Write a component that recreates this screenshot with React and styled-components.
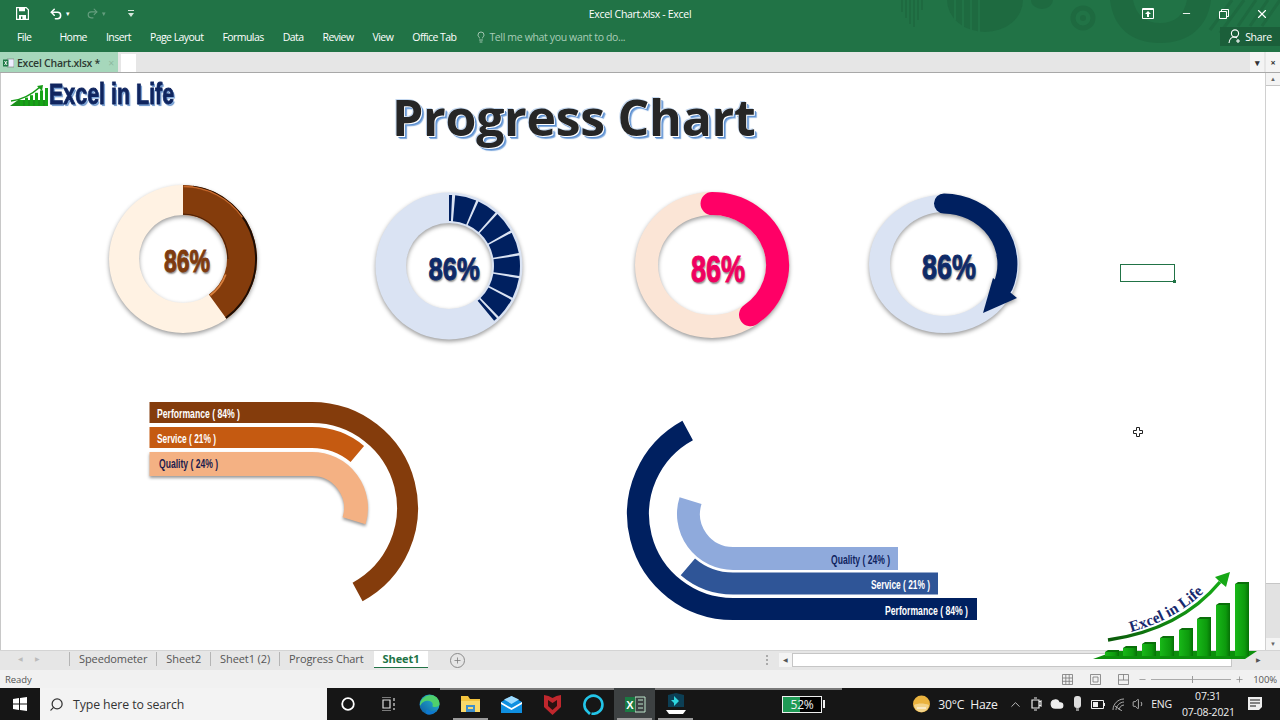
import React from 'react';
import styled, { createGlobalStyle } from 'styled-components';
import { Undo2, Redo2, Lightbulb, Search, Minus, X, ChevronUp, Cloud, Volume1, Plus } from 'lucide-react';

const GlobalStyle = createGlobalStyle`
  html, body { margin: 0; padding: 0; background: #fff; overflow: hidden; }
  body { font-family: "Open Sans", "Noto Sans", sans-serif; }
`;

const Page = styled.div`
  position: relative;
  width: 1280px;
  height: 720px;
  display: flex;
  flex-direction: column;
  overflow: hidden;
`;

/* ---------- window chrome ---------- */
const Header = styled.header`
  position: relative;
  height: 52px;
  background: #217346;
  color: #fff;
  display: flex;
  flex-direction: column;
  flex: none;
`;
const Deco = styled.svg`
  position: absolute;
  left: 890px;
  top: 0;
  pointer-events: none;
`;
const TitleRow = styled.div`
  position: relative;
  height: 27px;
  display: flex;
  align-items: center;
  padding-left: 15px;
`;
const QuickIcon = styled.span`
  display: inline-flex;
  align-items: center;
  justify-content: center;
  width: ${p => p.$w || 14}px;
  margin-right: ${p => p.$gap || 0}px;
  opacity: ${p => (p.$dim ? 0.3 : 1)};
  font-size: 7px;
`;
const DocTitle = styled.div`
  position: absolute;
  left: 0;
  right: 0;
  top: 7px;
  text-align: center;
  font-size: 10.5px;
  line-height: 14px;
  letter-spacing: -0.3px;
`;
const WindowButtons = styled.div`
  margin-left: auto;
  display: flex;
  align-items: center;
  gap: 24px;
  padding-right: 11px;
`;
const WinBtn = styled.span`
  display: inline-flex;
  width: 14px;
  justify-content: center;
`;
const RibbonRow = styled.nav`
  position: relative;
  flex: 1;
  display: flex;
  align-items: center;
  padding: 0 0 5px 17px;
  font-size: 10.5px;
  letter-spacing: -0.55px;
`;
const RibbonTab = styled.span`
  margin-right: ${p => p.$gap || 19}px;
  white-space: nowrap;
`;
const TellMe = styled.span`
  display: inline-flex;
  align-items: center;
  gap: 2px;
  color: #a9cdb8;
  margin-left: 0;
  letter-spacing: -0.35px;
`;
const ShareBtn = styled.div`
  position: absolute;
  right: 0;
  top: 0;
  width: 60px;
  height: 19px;
  background: #1b5f3a;
  display: flex;
  align-items: center;
  justify-content: center;
  gap: 3px;
  letter-spacing: -0.3px;
`;

const DocTabs = styled.div`
  flex: none;
  height: 21px;
  background: #e6e6e6;
  border-bottom: 1px solid #a8a8a8;
  box-sizing: border-box;
  display: flex;
  align-items: stretch;
`;
const DocTab = styled.div`
  width: 118px;
  background: #a6d7bb;
  display: flex;
  align-items: center;
  gap: 3px;
  padding: 1px 0 0 3px;
  box-sizing: border-box;
  font-size: 10.5px;
  font-weight: 600;
  letter-spacing: -0.25px;
  color: #2d3a33;
  white-space: nowrap;
`;
const TabClose = styled.span`
  color: #8db9a0;
  font-weight: 400;
  margin-left: 5px;
`;
const BlankTab = styled.div`
  width: 15px;
  margin: 2px 0 0 3px;
  background: #fff;
`;
const TabTools = styled.div`
  margin-left: auto;
  display: flex;
  gap: 2px;
`;
const TabTool = styled.span`
  width: 14px;
  background: #f4f4f4;
  display: flex;
  align-items: center;
  justify-content: center;
  font-size: 9px;
  font-weight: 700;
  color: #333;
`;

/* ---------- sheet ---------- */
const SheetArea = styled.main`
  flex: 1;
  min-height: 0;
  display: flex;
`;
const Canvas = styled.div`
  position: relative;
  flex: 1;
  background: #fff;
  border-left: 1px solid #c8c8c8;
`;
const VScroll = styled.aside`
  flex: none;
  width: 15px;
  background: #e2e2e2;
  border-left: 1px solid #d0d0d0;
  box-sizing: border-box;
  display: flex;
  flex-direction: column;
`;
const ScrollArrow = styled.span`
  height: ${p => p.$h || 12}px;
  background: #f4f4f4;
  display: flex;
  align-items: center;
  justify-content: center;
  font-size: 6px;
  color: #666;
  flex: none;
`;
const VThumb = styled.div`
  height: 497px;
  background: #fff;
  border: 1px solid #c6c6c6;
  border-width: 1px 0;
  flex: none;
`;
const Spacer = styled.div`
  flex: 1;
`;

const Placed = styled.div`
  position: absolute;
  left: ${p => p.$x}px;
  top: ${p => p.$y}px;
`;
const LogoMark = styled(Placed)`
  display: flex;
  align-items: flex-end;
`;
const LogoText = styled.span`
  display: inline-block;
  font-family: "Liberation Sans", sans-serif;
  font-weight: 700;
  font-size: 30px;
  line-height: 27px;
  color: #10255f;
  -webkit-text-stroke: 0.8px #10255f;
  text-shadow: 1px 1px 0 #8db4e2, -1px 0 0 #cfe0f4, 2px 2px 1px #6d96cc;
  white-space: nowrap;
  transform: scaleX(0.715);
  transform-origin: left center;
`;
const SheetTitle = styled(Placed)`
  font-family: "Open Sans", "Noto Sans", sans-serif;
  font-weight: 700;
  font-size: 50px;
  line-height: 60px;
  letter-spacing: -0.3px;
  color: #262626;
  text-shadow: 1px 1px 0 #fff, -1px -1px 0 #c5d8ef, 2px 2px 0 #5c8fd0, 3px 3px 1px #7ea8dc;
  white-space: nowrap;
`;
const Gauge = styled(Placed)`
  width: 180px;
  height: 180px;
  display: grid;
  place-items: center;
`;
const GaugeArt = styled.svg`
  grid-area: 1 / 1;
  width: 180px;
  height: 180px;
  overflow: visible;
`;
const Percent = styled.span`
  grid-area: 1 / 1;
  font-family: "Liberation Sans", sans-serif;
  font-weight: 700;
  font-size: ${p => p.$size}px;
  line-height: 1;
  color: ${p => p.$color};
  -webkit-text-stroke: 0.9px ${p => p.$color};
  text-shadow: 1px 2px 2px rgba(0, 0, 0, 0.45);
  transform: translate(${p => p.$dx}px, ${p => p.$dy}px) scaleX(${p => p.$sx});
`;
const ShadowGroup = styled.g`
  filter: drop-shadow(0 2px 2px rgba(0, 0, 0, 0.4));
`;
const SelectedCell = styled(Placed)`
  width: 55px;
  height: 18px;
  box-sizing: border-box;
  border: 1.5px solid #217346;
  &::after {
    content: '';
    position: absolute;
    right: -2px;
    bottom: -2px;
    width: 3px;
    height: 3px;
    background: #217346;
  }
`;
const CellCursor = styled(Placed)`
  width: 10px;
  height: 10px;
  display: flex;
`;
const BarChart = styled.svg`
  position: absolute;
  left: ${p => p.$x}px;
  top: ${p => p.$y}px;
  overflow: visible;
`;
const BarStroke = styled.path`
  fill: none;
  ${p => p.$shadow && 'filter: drop-shadow(0 2px 1.5px rgba(0, 0, 0, 0.4));'}
`;
const BarLabel = styled.text`
  font-family: "Liberation Sans", sans-serif;
  font-weight: 700;
  font-size: 12px;
  fill: ${p => p.$fill};
`;

/* ---------- sheet tabs / status ---------- */
const SheetTabs = styled.div`
  flex: none;
  height: 20px;
  background: #e6e6e6;
  border-top: 1px solid #d4d4d4;
  box-sizing: border-box;
  display: flex;
  align-items: stretch;
  font-size: 11px;
  letter-spacing: -0.1px;
  color: #555;
`;
const TabNav = styled.div`
  width: 69px;
  display: flex;
  gap: 12px;
  align-items: center;
  padding: 0 0 3px 18px;
  box-sizing: border-box;
  font-size: 6px;
  color: #bbb;
`;
const SheetTab = styled.div`
  padding: 0 9px;
  display: flex;
  align-items: center;
  white-space: nowrap;
  ${p => (p.$active
    ? 'background:#fff;color:#217346;font-weight:700;border-bottom:1.5px solid #217346;margin:0 0 2px 1px;padding:0 9px 2px;'
    : 'border-left:1px solid #b5b5b5;margin:1px 0 4px;padding-bottom:1px;')}
`;
const AddSheet = styled.span`
  margin: 0 0 1px 22px;
  align-self: center;
  width: 13px;
  height: 13px;
  border: 1px solid #8a8a8a;
  border-radius: 50%;
  display: flex;
  align-items: center;
  justify-content: center;
  color: #777;
`;
const SplitDots = styled.span`
  margin-left: auto;
  width: 2px;
  height: 11px;
  align-self: center;
  background: repeating-linear-gradient(#aaa 0 2px, transparent 2px 4px);
`;
const HScroll = styled.div`
  margin: 2px 17px 3px 11px;
  display: flex;
  align-items: stretch;
  font-size: 6px;
  color: #555;
`;
const HArrow = styled.span`
  width: ${p => p.$w}px;
  display: flex;
  align-items: center;
  justify-content: center;
  background: ${p => (p.$gap ? 'transparent' : '#f4f4f4')};
  margin-left: ${p => p.$gap || 0}px;
`;
const HThumb = styled.div`
  width: 440px;
  background: #fff;
  border: 1px solid #c6c6c6;
  box-sizing: border-box;
`;
const StatusBar = styled.footer`
  flex: none;
  height: 18px;
  background: #f1f1f1;
  box-sizing: border-box;
  display: flex;
  align-items: center;
  padding: 0 3px 0 5px;
  font-size: 9.5px;
  letter-spacing: -0.1px;
  color: #555;
`;
const StatusTools = styled.div`
  margin-left: auto;
  display: flex;
  align-items: center;
  gap: 4px;
`;
const ViewIcon = styled.svg`
  margin-right: ${p => p.$gap}px;
  fill: none;
  stroke: #777;
  stroke-width: 0.8;
`;
const ZoomSlider = styled.span`
  position: relative;
  width: 80px;
  height: 1px;
  background: #aaa;
  &::after {
    content: '';
    position: absolute;
    left: 41px;
    top: -3px;
    width: 1px;
    height: 7px;
    background: #999;
  }
`;
const ZoomValue = styled.span`
  margin-left: 5px;
`;

/* ---------- taskbar ---------- */
const Taskbar = styled.div`
  position: relative;
  flex: none;
  height: 32px;
  background: #161616;
  display: flex;
  align-items: stretch;
  color: #f0f0f0;
  &::before {
    content: '';
    position: absolute;
    left: 440px;
    width: 402px;
    top: 0;
    height: 2px;
    background: #7a7a7a;
  }
`;
const StartBtn = styled.div`
  width: 40px;
  display: flex;
  align-items: center;
  justify-content: center;
  flex: none;
`;
const SearchBox = styled.div`
  width: 287px;
  flex: none;
  background: #f3f3f3;
  display: flex;
  align-items: center;
  gap: 9px;
  padding-left: 9px;
  box-sizing: border-box;
  color: #333;
  font-size: 12.3px;
  letter-spacing: -0.1px;
`;
const FlippedSearch = styled(Search)`
  transform: scaleX(-1);
`;
const TaskSlot = styled.div`
  position: relative;
  width: 41px;
  flex: none;
  display: flex;
  align-items: center;
  justify-content: center;
  background: ${p => (p.$active ? '#3d4142' : 'transparent')};
  ${p => p.$running && `
    &::after {
      content: '';
      position: absolute;
      left: 3px;
      right: 3px;
      bottom: 0;
      height: 2px;
      background: #9a9a9a;
    }`}
`;
const BatteryWidget = styled.div`
  position: relative;
  margin: 0 0 0 86px;
  align-self: center;
  width: 40px;
  height: 17px;
  box-sizing: border-box;
  border: 1.5px solid #eee;
  background: linear-gradient(90deg, #1f9a55 0 46%, #000 46%);
  display: flex;
  align-items: center;
  justify-content: center;
  font-size: 12px;
  letter-spacing: -0.2px;
  &::after {
    content: '';
    position: absolute;
    right: -4px;
    top: 3px;
    width: 2px;
    height: 8px;
    background: #eee;
  }
`;
const Tray = styled.div`
  margin-left: auto;
  display: flex;
  align-items: center;
  padding-right: 18px;
  font-size: 11px;
`;
const Weather = styled.span`
  font-size: 12.2px;
  margin: 0 8px 0 8px;
  letter-spacing: -0.2px;
  white-space: nowrap;
`;
const TrayIcon = styled.span`
  display: inline-flex;
  justify-content: center;
  width: 20.5px;
`;
const Lang = styled.span`
  margin: 0 10px 0 2px;
  font-size: 10.5px;
  letter-spacing: -0.2px;
`;
const Clock = styled.div`
  width: 52px;
  text-align: center;
  font-size: 10.5px;
  line-height: 16px;
  letter-spacing: -0.2px;
  margin-right: 14px;
  white-space: nowrap;
`;

/* ---------- helpers ---------- */
const polar = (r, deg, cx = 0, cy = 0) => {
  const a = (deg * Math.PI) / 180;
  return [cx + r * Math.sin(a), cy - r * Math.cos(a)];
};
const sector = (r0, r1, a0, a1) => {
  const [x0, y0] = polar(r1, a0);
  const [x1, y1] = polar(r1, a1);
  const [x2, y2] = polar(r0, a1);
  const [x3, y3] = polar(r0, a0);
  return `M${x0} ${y0}A${r1} ${r1} 0 0 1 ${x1} ${y1}L${x2} ${y2}A${r0} ${r0} 0 0 0 ${x3} ${y3}Z`;
};
const arc = (r, a0, a1) => {
  const [x0, y0] = polar(r, a0);
  const [x1, y1] = polar(r, a1);
  return `M${x0} ${y0}A${r} ${r} 0 0 1 ${x1} ${y1}`;
};
const ring = (rx, ry, irx, iry) =>
  `M${-rx} 0A${rx} ${ry} 0 1 1 ${rx} 0A${rx} ${ry} 0 1 1 ${-rx} 0Z` +
  `M${-irx} 0A${irx} ${iry} 0 1 0 ${irx} 0A${irx} ${iry} 0 1 0 ${-irx} 0Z`;

const SEGMENTS = [[0, 2.5], [5, 22.5], [24.5, 41], [43, 60], [62, 79.5], [81.5, 98], [100, 116.5], [118.5, 135.5], [137.5, 140.5]];

// straight run into a clockwise arc around (cx, cy), ending at angle `end`
const barPath = (fromX, y, cx, cy, r, end) => {
  const [ex, ey] = polar(r, end, cx, cy);
  return `M${fromX} ${y}L${cx} ${y}A${r} ${r} 0 0 1 ${ex} ${ey}`;
};

const Gear = () => (
  <Deco width="390" height="52" viewBox="890 0 390 52" fill="none">
    <path d="M902 0v12M906 0v18M910 0v24M914 0v27M918 0v20M922 0v10" stroke="#1e6a40" strokeWidth="2" />
    <path d="M947 0a38 32 0 0 0 76 0Z" fill="#1e6a40" />
    <path d="M955 0v20M963 0v27M971 0v30M979 0v32" stroke="#217346" strokeWidth="2" />
    <ellipse cx="1042" cy="0" rx="11" ry="9" fill="#1e6a40" />
    <circle cx="1083" cy="18" r="10" stroke="#1e6a40" strokeWidth="5" />
    <circle cx="1083" cy="18" r="3" fill="#1e6a40" />
    <path d="M1110 0c3 26 20 43 50 43s48-17 51-43h-24c-3 15-12 23-27 23s-24-8-27-23Z" fill="#1e6a40" />
    <path d="M1232 0l-22 30M1244 0l-24 33M1256 0l-18 26M1268 0l-18 26M1280 0l-18 26" stroke="#1e6a40" strokeWidth="3" />
  </Deco>
);

const SmallChart = () => (
  <svg width="39" height="23" viewBox="0 0 39 23">
    <path d="M0 22L8 16H38V22Z" fill="#1a8f1a" />
    <path d="M1 17C12 16 20 12 30 3" stroke="#179a17" strokeWidth="1.6" fill="none" />
    <path d="M27 2l6-1-1 6Z" fill="#179a17" />
    {[10, 15, 20, 25, 30, 35].map((x, i) => (
      <rect key={x} x={x} y={16 - i * 2.4} width="3" height={6 + i * 2.4} fill="#16a316" />
    ))}
  </svg>
);

const BigLogo = styled.svg`
  position: absolute;
  left: 1090px;
  top: 568px;
  overflow: visible;
`;
const LogoCurveText = styled.text`
  font-family: "Liberation Serif", serif;
  font-weight: 700;
  font-size: 15.5px;
  fill: #17296e;
`;

const LOGO_BARS = [[15, 84], [33, 80], [52, 76], [70, 70], [89, 62], [107, 51], [126, 37], [145, 16]];

const ExcelLifeLogo = () => (
  <BigLogo width="175" height="94" viewBox="0 0 175 94">
    <defs>
      <linearGradient id="arrowGrad" x1="0" x2="1">
        <stop offset="0" stopColor="#0a5a0a" />
        <stop offset="1" stopColor="#16a816" />
      </linearGradient>
      <linearGradient id="barGrad" x1="0" x2="1">
        <stop offset="0" stopColor="#18b818" />
        <stop offset="0.7" stopColor="#0d9a0d" />
        <stop offset="1" stopColor="#067006" />
      </linearGradient>
    </defs>
    <path d="M3 91L25 83H167L155 91Z" fill="#0c8f0c" />
    {LOGO_BARS.map(([x, top]) => (
      <g key={x}>
        <rect x={x} y={top} width="14" height={88 - top} fill="url(#barGrad)" />
        <path d={`M${x} ${top}l3 -2h11v2Z`} fill="#0a6f0a" />
      </g>
    ))}
    <path d="M18 72C60 66 100 50 130 14" stroke="url(#arrowGrad)" strokeWidth="3.5" fill="none" />
    <path d="M125 9L140 4 136 19 130 14Z" fill="#16a816" />
    <path id="logoCurve" d="M41 64C65 57 90 47 113 25" fill="none" />
    <LogoCurveText textLength="84" lengthAdjust="spacingAndGlyphs">
      <textPath href="#logoCurve">Excel in Life</textPath>
    </LogoCurveText>
  </BigLogo>
);

const TRAY_STROKE = { stroke: '#eee', fill: 'none', strokeWidth: 1.2 };

export default function App() {
  return (
    <Page>
      <GlobalStyle />
      <Header>
        <Gear />
        <TitleRow>
          <QuickIcon $gap={20}>
            <svg width="13" height="13" viewBox="0 0 13 13">
              <path d="M.6.6h9.6l2.2 2.2v9.6H.6Z" fill="none" stroke="#fff" strokeWidth="1.2" />
              <path d="M3 .6h6v3.6H3zM3 8h7v4.5H3z" fill="#fff" />
              <path d="M5 9.5h1.4V12H5z" fill="#217346" />
            </svg>
          </QuickIcon>
          <QuickIcon><Undo2 size={14} color="#fff" strokeWidth={2.6} /></QuickIcon>
          <QuickIcon $w={10} $gap={12}>▾</QuickIcon>
          <QuickIcon $dim><Redo2 size={13} color="#fff" /></QuickIcon>
          <QuickIcon $dim $w={10} $gap={17}>▾</QuickIcon>
          <QuickIcon $w={10}>
            <svg width="6" height="8" viewBox="0 0 6 8"><path d="M0 0h6v1H0zM0 3h6L3 7Z" fill="#d5e6dc" /></svg>
          </QuickIcon>
          <DocTitle>Excel Chart.xlsx - Excel</DocTitle>
          <WindowButtons>
            <WinBtn>
              <svg width="12" height="11" viewBox="0 0 12 11">
                <path d="M.5.5h11v10H.5z" fill="none" stroke="#fff" />
                <path d="M6 3L9 6H7v3H5V6H3Z" fill="#fff" /><path d="M1 1h10v1H1z" fill="#fff" />
              </svg>
            </WinBtn>
            <WinBtn><Minus size={11} color="#fff" strokeWidth={2} /></WinBtn>
            <WinBtn>
              <svg width="10" height="10" viewBox="0 0 10 10" fill="none" stroke="#fff">
                <path d="M.5 2.500h7v7h-7zM2.500 2.500v-2h7v7h-2" />
              </svg>
            </WinBtn>
            <WinBtn><X size={14} color="#fff" strokeWidth={2} /></WinBtn>
          </WindowButtons>
        </TitleRow>
        <RibbonRow>
          <RibbonTab $gap={28}>File</RibbonTab>
          <RibbonTab>Home</RibbonTab>
          <RibbonTab>Insert</RibbonTab>
          <RibbonTab>Page Layout</RibbonTab>
          <RibbonTab>Formulas</RibbonTab>
          <RibbonTab>Data</RibbonTab>
          <RibbonTab>Review</RibbonTab>
          <RibbonTab>View</RibbonTab>
          <RibbonTab>Office Tab</RibbonTab>
          <TellMe><Lightbulb size={12} color="#d5e6dc" strokeWidth={1.4} />Tell me what you want to do...</TellMe>
          <ShareBtn>
            <svg width="14" height="15" viewBox="0 0 14 15" fill="none" stroke="#fff" strokeWidth="1.1">
              <circle cx="7" cy="4.500" r="3.600" />
              <path d="M1 14c.4-3.500 2.600-6 5-6 1.200 0 2 .3 3 1M10 10v4M8 12h4" />
            </svg>
            Share
          </ShareBtn>
        </RibbonRow>
      </Header>

      <DocTabs>
        <DocTab>
          <svg width="11" height="10" viewBox="0 0 11 10">
            <path d="M4 1h7v8H4z" fill="#eef" stroke="#777" strokeWidth=".6" />
            <path d="M0 1.500h5.500v7H0z" fill="#1e7a46" />
            <path d="M1.500 3l2.500 4M4 3L1.500 7" stroke="#fff" strokeWidth=".9" />
          </svg>
          Excel Chart.xlsx *<TabClose>×</TabClose>
        </DocTab>
        <BlankTab />
        <TabTools>
          <TabTool>▾</TabTool>
          <TabTool>×</TabTool>
        </TabTools>
      </DocTabs>

      <SheetArea>
        <Canvas>
          <LogoMark $x={9} $y={7}>
            <SmallChart />
            <LogoText>Excel in Life</LogoText>
          </LogoMark>
          <SheetTitle $x={391} $y={14}>Progress Chart</SheetTitle>

          {/* plain donut with bevel */}
          <Gauge $x={92} $y={96}>
            <GaugeArt viewBox="-90 -90 180 180">
              <ShadowGroup>
                <path d={ring(74, 74, 44, 44)} fill="#fff2e3" fillRule="evenodd" />
              </ShadowGroup>
              <path d={sector(44, 74, 0, 144)} fill="#843c0c" />
              <path d={arc(73, 8, 144)} fill="none" stroke="#1e0d04" strokeWidth="2" />
              <path d={arc(72.500, 0.5, 55)} fill="none" stroke="#c8682a" strokeWidth="1.300" />
              <path d={arc(45.500, 110, 143)} fill="none" stroke="#d9803f" strokeWidth="1.800" />
              <path d={arc(45, 0, 90)} fill="none" stroke="#4a2008" strokeWidth="1" />
            </GaugeArt>
            <Percent $size={32} $sx={0.72} $color="#7f3b0e" $dx={4} $dy={2}>86%</Percent>
          </Gauge>

          {/* segmented donut */}
          <Gauge $x={358} $y={103}>
            <GaugeArt viewBox="-90 -90 180 180">
              <ShadowGroup>
                <path d={ring(73.5, 73.5, 43, 43)} fill="#dae3f3" fillRule="evenodd" />
              </ShadowGroup>
              {SEGMENTS.map(([a, b]) => (
                <path key={a} d={sector(45, 71, a, b)} fill="#002060" />
              ))}
            </GaugeArt>
            <Percent $size={32} $sx={0.8} $color="#0f2a68" $dx={5} $dy={3}>86%</Percent>
          </Gauge>

          {/* rounded arc, slightly oval like the stretched original */}
          <Gauge $x={621} $y={102}>
            <GaugeArt viewBox="-90 -90 180 180">
              <ShadowGroup>
                <path d={ring(77, 73, 54, 50)} fill="#fbe5d6" fillRule="evenodd" />
                <path d="M0 -61.500A65.500 61.500 0 0 1 38.500 49.800" fill="none" stroke="#ff0066" strokeWidth="23" strokeLinecap="round" />
              </ShadowGroup>
            </GaugeArt>
            <Percent $size={37} $sx={0.73} $color="#f00060" $dx={6} $dy={4}>86%</Percent>
          </Gauge>

          {/* arrow arc */}
          <Gauge $x={853} $y={101}>
            <GaugeArt viewBox="-90 -90 180 180">
              <ShadowGroup>
                <path d={ring(75, 69, 54, 52)} fill="#dae3f3" fillRule="evenodd" />
                <path d="M0 -60.500A64.500 60.500 0 0 1 59 22" fill="none" stroke="#002060" strokeWidth="20" strokeLinecap="round" />
                <path d="M73 34L39 49 49 14Z" fill="#002060" />
              </ShadowGroup>
            </GaugeArt>
            <Percent $size={35} $sx={0.77} $color="#0f2a68" $dx={5} $dy={1.5}>86%</Percent>
          </Gauge>

          <SelectedCell $x={1119} $y={191} />
          <CellCursor $x={1132} $y={354}>
            <svg width="10" height="10" viewBox="0 0 10 10">
              <path d="M3.500.5h3v3h3v3h-3v3h-3v-3h-3v-3h3Z" fill="#fff" stroke="#222" />
            </svg>
          </CellCursor>

          {/* left bar chart */}
          <BarChart $x={139} $y={322} width="290" height="215" viewBox="140 395 290 215">
            <BarStroke $shadow d={barPath(149.5, 464, 312, 508, 44, 107)} stroke="#f4b183" strokeWidth="24" />
            <BarStroke d={barPath(149.5, 437.5, 312, 508, 70.5, 40)} stroke="#c55a11" strokeWidth="21" />
            <BarStroke d={barPath(149.5, 412.5, 312, 508, 95.5, 151.5)} stroke="#843c0c" strokeWidth="21" />
            <BarLabel x="157" y="417.5" textLength="83" lengthAdjust="spacingAndGlyphs" $fill="#fff">Performance ( 84% )</BarLabel>
            <BarLabel x="157" y="442.5" textLength="59" lengthAdjust="spacingAndGlyphs" $fill="#fff">Service ( 21% )</BarLabel>
            <BarLabel x="159" y="468" textLength="59" lengthAdjust="spacingAndGlyphs" $fill="#1c1c4e">Quality ( 24% )</BarLabel>
          </BarChart>

          {/* right bar chart */}
          <BarChart $x={619} $y={342} width="370" height="215" viewBox="620 415 370 215">
            <BarStroke d={barPath(898, 558.5, 733, 514, 44.5, -72.5)} stroke="#8faadc" strokeWidth="23" />
            <BarStroke d={barPath(938, 583.5, 733, 514, 69.5, -139.5)} stroke="#2f5597" strokeWidth="22" />
            <BarStroke d={barPath(977, 609, 733, 514, 95, -28.5)} stroke="#002060" strokeWidth="22" />
            <BarLabel x="831" y="564" textLength="59" lengthAdjust="spacingAndGlyphs" $fill="#10245f">Quality ( 24% )</BarLabel>
            <BarLabel x="871" y="589" textLength="59" lengthAdjust="spacingAndGlyphs" $fill="#fff">Service ( 21% )</BarLabel>
            <BarLabel x="885" y="614.5" textLength="83" lengthAdjust="spacingAndGlyphs" $fill="#fff">Performance ( 84% )</BarLabel>
          </BarChart>
        </Canvas>
        <VScroll>
          <ScrollArrow $h={12}>▲</ScrollArrow>
          <VThumb />
          <Spacer />
          <ScrollArrow $h={12}>▼</ScrollArrow>
        </VScroll>
      </SheetArea>

      <SheetTabs>
        <TabNav><span>◀</span><span>▶</span></TabNav>
        <SheetTab>Speedometer</SheetTab>
        <SheetTab>Sheet2</SheetTab>
        <SheetTab>Sheet1 (2)</SheetTab>
        <SheetTab>Progress Chart</SheetTab>
        <SheetTab $active>Sheet1</SheetTab>
        <AddSheet><Plus size={9} /></AddSheet>
        <SplitDots />
        <HScroll>
          <HArrow $w={13}>◀</HArrow>
          <HThumb />
          <HArrow $w={9} $gap={22}>▶</HArrow>
        </HScroll>
      </SheetTabs>

      <StatusBar>
        Ready
        <StatusTools>
          <ViewIcon $gap={13} width="11" height="11" viewBox="0 0 11 11">
            <path d="M.5.5h10v10H.5zM.5 4h10M.5 7.300h10M3.800.5v10M7.200.5v10" />
          </ViewIcon>
          <ViewIcon $gap={13} width="11" height="11" viewBox="0 0 11 11">
            <path d="M.5.5h10v10H.5zM3 3h5v5H3z" />
          </ViewIcon>
          <ViewIcon $gap={5} width="11" height="11" viewBox="0 0 11 11">
            <path d="M.5.5h10v10H.5zM.5 6h10M5.500.5V6" />
          </ViewIcon>
          <Minus size={9} color="#888" />
          <ZoomSlider />
          <Plus size={9} color="#888" />
          <ZoomValue>100%</ZoomValue>
        </StatusTools>
      </StatusBar>

      <Taskbar>
        <StartBtn>
          <svg width="14" height="14" viewBox="0 0 14 14" fill="#fff">
            <path d="M0 2l6-.9v5.500H0zM7 1l7-1v6.600H7zM0 7.400h6v5.500L0 12zM7 7.400h7V14l-7-1z" />
          </svg>
        </StartBtn>
        <SearchBox>
          <FlippedSearch size={15} color="#333" />
          Type here to search
        </SearchBox>
        <TaskSlot>
          <svg width="14" height="14" viewBox="0 0 14 14"><circle cx="7" cy="7" r="5.800" fill="none" stroke="#fff" strokeWidth="1.800" /></svg>
        </TaskSlot>
        <TaskSlot>
          <svg width="15" height="14" viewBox="0 0 15 14" fill="none" stroke="#ddd" strokeWidth="1.200">
            <path d="M1 0h9M1 14h9M2 3h7v8H2zM13 1v3M13 6v3M13 11v2" />
          </svg>
        </TaskSlot>
        <TaskSlot>
          <svg width="21" height="21" viewBox="0 0 21 21">
            <defs>
              <linearGradient id="edgeGrad" x1="0" y1="1" x2="1" y2="0">
                <stop offset="0" stopColor="#0c59a4" /><stop offset="1" stopColor="#2bc3d2" />
              </linearGradient>
            </defs>
            <circle cx="10.500" cy="10.500" r="10" fill="url(#edgeGrad)" />
            <path d="M1 9C3 3 9 .5 14 1.500c4 1 6.500 4.500 6.500 8.500 0 2-2 3-4.500 3-1.500 0-3-.6-2.500-1.300 1-1.700-.5-5-4.500-5C6 6.700 3 8 1 12Z" fill="#4fd06c" />
            <path d="M8 15c2 3 7 3 10 .5-2 4-6 5.500-9 5C6 20 7 17 8 15Z" fill="#0e78d0" />
          </svg>
        </TaskSlot>
        <TaskSlot $running>
          <svg width="19" height="18" viewBox="0 0 19 18">
            <path d="M0 1h7l2 3h10v13H0Z" fill="#f2c33e" />
            <path d="M0 6h19v11H0Z" fill="#f9d96a" />
            <path d="M5 10h9v7H5Z" fill="#3e8fcb" />
            <path d="M7 12h5v2H7Z" fill="#f9d96a" />
          </svg>
        </TaskSlot>
        <TaskSlot>
          <svg width="21" height="17" viewBox="0 0 21 17">
            <path d="M0 6L10.500 0 21 6v11H0Z" fill="#0f8fe0" />
            <path d="M0 6l10.500 6L21 6v2L10.500 14 0 8Z" fill="#fff" />
            <path d="M3 3.500L10.500 0 18 3.500 10.500 8Z" fill="#9fdcff" />
          </svg>
        </TaskSlot>
        <TaskSlot>
          <svg width="17" height="21" viewBox="0 0 17 21">
            <path d="M0 1l4.500 1 4 2 4-2L17 1v12l-8.500 8L0 13Z" fill="#c0272d" />
            <path d="M4 6l4.500 3L13 6v6l-4.500 4L4 12Z" fill="#2b1111" />
          </svg>
        </TaskSlot>
        <TaskSlot>
          <svg width="21" height="21" viewBox="0 0 21 21" fill="none">
            <path d="M7 20L4.500 17.500A9 9 0 1 1 8.500 19.500" stroke="#23c5e8" strokeWidth="2.600" />
          </svg>
        </TaskSlot>
        <TaskSlot $active $running>
          <svg width="22" height="17" viewBox="0 0 22 17">
            <path d="M11 1h10v15H11z" fill="none" stroke="#bde5cb" />
            <path d="M14 4h5M14 8h5M14 12h5" stroke="#bde5cb" />
            <path d="M1 1h10v15H1z" fill="#1b7a43" />
            <text x="6" y="13" textAnchor="middle" fontSize="11" fontWeight="700" fill="#fff" fontFamily="Liberation Sans, sans-serif">X</text>
          </svg>
        </TaskSlot>
        <TaskSlot $running>
          <svg width="20" height="22" viewBox="0 0 20 22">
            <path d="M2 2l8-2 8 2v12H2Z" fill="#0c3f55" />
            <path d="M8 3l5 5-5 5V10L5 7h3Z" fill="#2fd7e0" />
            <path d="M0 17h20l-3 4H3Z" fill="#fff" />
          </svg>
        </TaskSlot>
        <BatteryWidget>52%</BatteryWidget>
        <Tray>
          <svg width="17" height="18" viewBox="0 0 17 18">
            <circle cx="8.500" cy="9" r="8.500" fill="#eab33f" />
            <path d="M1 10c4-2 10-2 15 0-1 5-4 7-7.500 7S2 15 1 10Z" fill="#f3d48a" />
            <path d="M4 13h9" stroke="#fff" />
          </svg>
          <Weather>30°C&nbsp; Haze</Weather>
          <TrayIcon><ChevronUp size={15} color="#ddd" strokeWidth={1.3} /></TrayIcon>
          <TrayIcon>
            <svg width="11" height="15" viewBox="0 0 11 15" {...TRAY_STROKE}><path d="M1 3h7v8H1zM3 1h3M3 13h3M8 5l2-1v5l-2-1" /></svg>
          </TrayIcon>
          <TrayIcon><Cloud size={14} color="#eee" fill="#eee" /></TrayIcon>
          <TrayIcon>
            <svg width="9" height="17" viewBox="0 0 9 17"><rect x="1" width="7" height="12" rx="3" fill="#ddd" /><path d="M3 12h3v3H3z" fill="#888" /></svg>
          </TrayIcon>
          <TrayIcon>
            <svg width="14" height="9" viewBox="0 0 14 9"><path d="M.5.500h12v8H.5z" fill="none" stroke="#eee" /><path d="M2 2h5v5H2zM13 3h1v3h-1z" fill="#eee" /></svg>
          </TrayIcon>
          <TrayIcon>
            <svg width="13" height="13" viewBox="0 0 13 13" fill="none" stroke="#bbb" strokeWidth=".9"><path d="M1 12C1 6 6 1 12 1M4 12c0-4 4-8 8-8M7 12c0-2 2-5 5-5M3 8l7 5" /></svg>
          </TrayIcon>
          <TrayIcon><Volume1 size={14} color="#eee" strokeWidth={1.2} /></TrayIcon>
          <Lang>ENG</Lang>
          <Clock>07:31<br />07-08-2021</Clock>
          <svg width="14" height="15" viewBox="0 0 14 15">
            <path d="M0 0h14v10l-3 3H0Z" fill="#eee" />
            <path d="M2 3h10M2 6h10M2 9h6" stroke="#161616" />
          </svg>
        </Tray>
      </Taskbar>
      <ExcelLifeLogo />
    </Page>
  );
}
